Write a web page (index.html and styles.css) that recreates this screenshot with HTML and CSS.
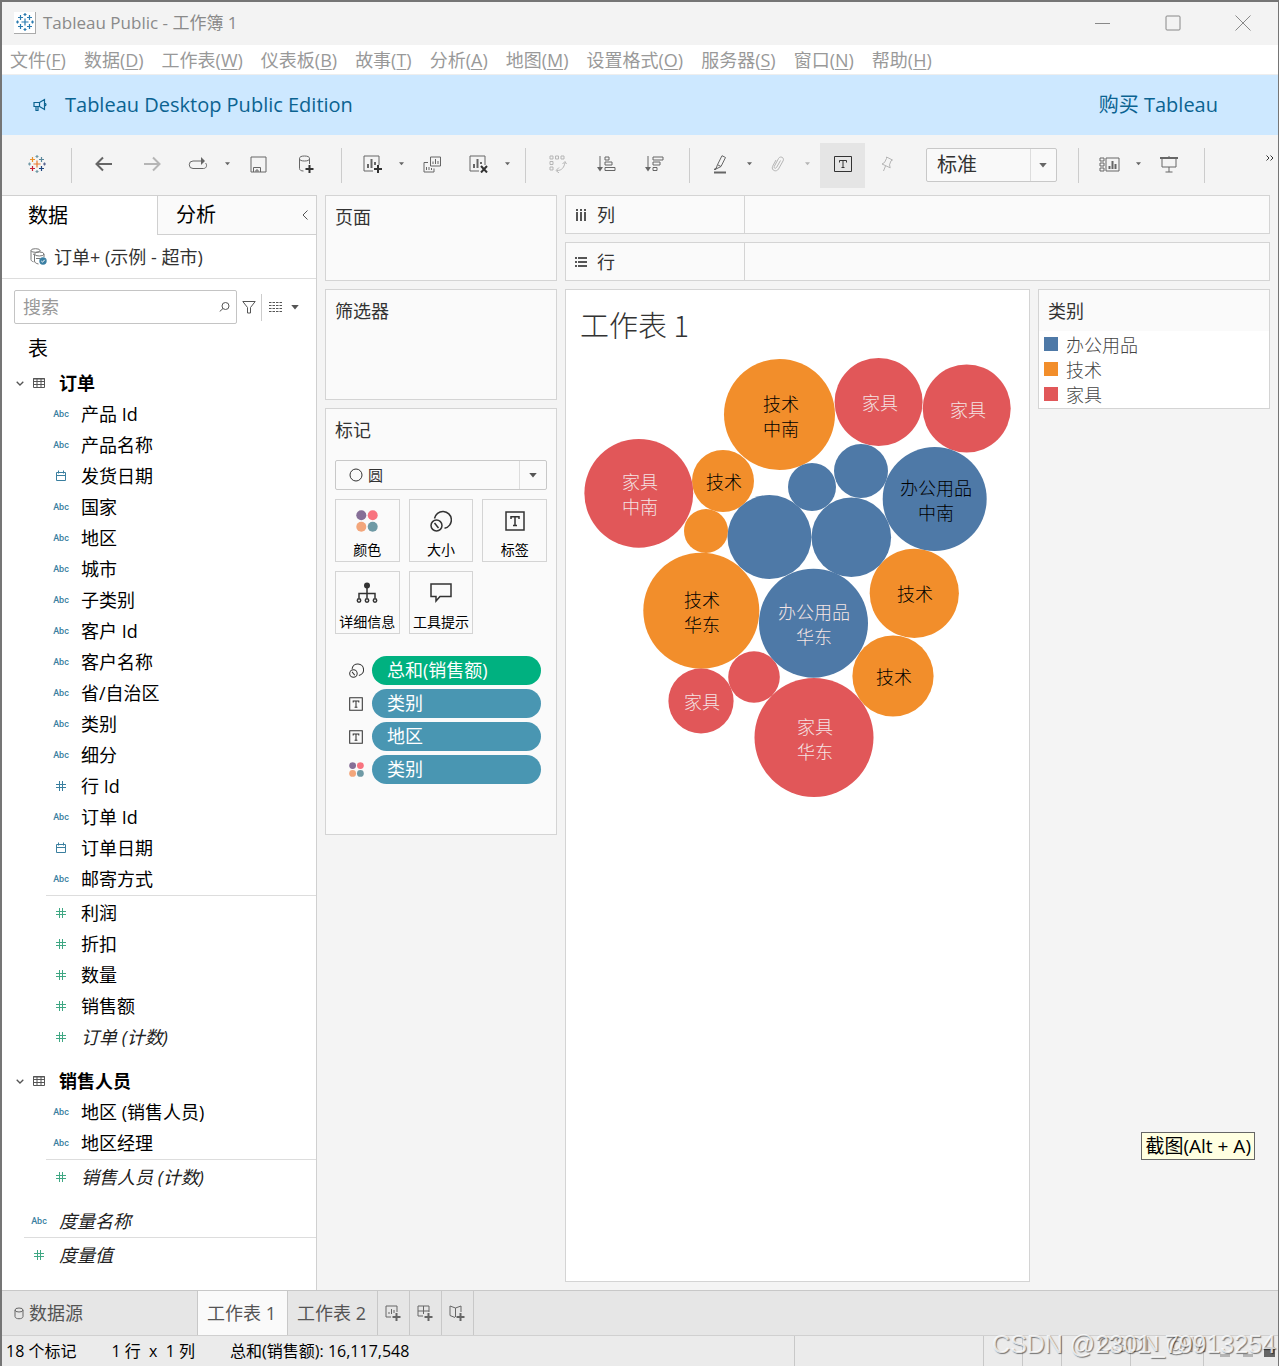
FILE: index.html
```html
<!DOCTYPE html>
<html lang="zh-CN">
<head>
<meta charset="utf-8">
<title>Tableau Public - 工作簿 1</title>
<link rel="stylesheet" href="styles.css">
</head>
<body>
<svg class="defs" aria-hidden="true">
  <symbol id="i-hash" viewBox="0 0 10 10"><path d="M3.5 0v10M6.5 0v10M0 3.5h10M0 6.5h10" fill="none" stroke="currentColor"/></symbol>
  <symbol id="i-cal" viewBox="0 0 12 12"><path d="M1.5 2.5h9v8h-9zM1.5 5.5h9M3.5 .5v3M8.500 .5v3" fill="none" stroke="currentColor"/></symbol>
  <symbol id="i-table" viewBox="0 0 12 10"><path d="M.5.500h11v9H.5zM0 1h12M.5 3.500h11M.5 6.500h11M4 1v8.500M8 1v8.500" fill="none" stroke="currentColor"/></symbol>
  <symbol id="i-down" viewBox="0 0 8 5"><path d="M.7 .7 4 4 7.300 .7" fill="none" stroke="currentColor" stroke-width="1.300"/></symbol>
  <symbol id="i-caret" viewBox="0 0 6 4"><path d="M0 0h6L3 3.500z" fill="currentColor"/></symbol>
  <symbol id="i-text" viewBox="0 0 20 20"><path d="M1 1h18v18H1z" fill="none" stroke="currentColor" stroke-width="1.500"/><path d="M6 8V5.700h8V8M10 5.700V14.500M8 14.500h4" fill="none" stroke="currentColor" stroke-width="1.500"/></symbol>
  <symbol id="i-size" viewBox="0 0 22 22"><path d="M4.500 8.500a8.500 8.500 0 1 1 10 9.800" fill="none" stroke="currentColor" stroke-width="1.500"/><circle cx="6.500" cy="15.500" r="5.500" fill="none" stroke="currentColor" stroke-width="1.500"/><path d="M4.500 13l4 5" stroke="currentColor" stroke-width="1.500"/></symbol>
  <symbol id="i-color" viewBox="0 0 22 22"><circle cx="5.300" cy="5.300" r="5" fill="#866f97"/><circle cx="16.700" cy="5.300" r="5" fill="#f8737f"/><circle cx="5.300" cy="16.700" r="5" fill="#f3a67b"/><circle cx="16.700" cy="16.700" r="5" fill="#6f9aa5"/></symbol>
  <symbol id="i-cross" viewBox="0 0 18 18"><path d="M9 5.500v7M5.500 9h7"/><path d="M4.500 2v5M2 4.500h5M13.500 2v5M11 4.500h5M4.500 11v5M2 13.500h5M13.500 11v5M11 13.500h5M9 0v3M7.500 1.500h3M9 15v3M7.500 16.500h3M1.500 7.500v3M0 9h3M16.500 7.500v3M15 9h3"/></symbol>
</svg>

<div class="window">
  <header class="titlebar">
    <span class="app-icon"><svg width="18" height="18" fill="none" stroke="#2a7bb0" stroke-width="1.200"><use href="#i-cross"/></svg></span>
    <h1>Tableau Public - 工作簿 1</h1>
    <div class="controls">
      <button type="button" aria-label="最小化"><svg width="16" height="16" viewBox="0 0 16 16"><path d="M0 8.500h15"/></svg></button>
      <button type="button" aria-label="最大化"><svg width="16" height="16" viewBox="0 0 16 16"><rect x="1" y="1" width="14" height="14" rx="1"/></svg></button>
      <button type="button" aria-label="关闭"><svg width="16" height="16" viewBox="0 0 16 16"><path d="M.5.5l15 15M15.500.5l-15 15"/></svg></button>
    </div>
  </header>

  <nav class="menubar">
    <a href="#">文件(<u>F</u>)</a><a href="#">数据(<u>D</u>)</a><a href="#">工作表(<u>W</u>)</a><a href="#">仪表板(<u>B</u>)</a><a href="#">故事(<u>T</u>)</a><a href="#">分析(<u>A</u>)</a><a href="#">地图(<u>M</u>)</a><a href="#">设置格式(<u>O</u>)</a><a href="#">服务器(<u>S</u>)</a><a href="#">窗口(<u>N</u>)</a><a href="#">帮助(<u>H</u>)</a>
  </nav>

  <div class="banner">
    <svg width="14" height="14" viewBox="0 0 14 14" fill="none" stroke="#0b6391" stroke-width="1.200"><path d="M1 4.500h5.500v4H1zM6.500 4.500l5-3v10l-5-3M3 8.500v4h2v-4M11.500 5c2 .3 2 2.700 0 3"/></svg>
    <span>Tableau Desktop Public Edition</span>
    <a href="#">购买 Tableau</a>
  </div>

  <div class="toolbar">
    <div class="group first">
      <button type="button" class="logo" aria-label="起始页"><svg width="18" height="18" viewBox="0 0 18 18" stroke-width="1.200"><path d="M9 5.500v7M5.500 9h7" stroke="#e8762c"/><path d="M4.500 2v5M2 4.500h5" stroke="#eb912b"/><path d="M13.500 2v5M11 4.500h5" stroke="#59879b"/><path d="M4.500 11v5M2 13.500h5" stroke="#c72035"/><path d="M13.500 11v5M11 13.500h5" stroke="#1f457e"/><path d="M9 0v3M7.500 1.500h3M9 15v3M7.500 16.500h3M1.500 7.500v3M0 9h3" stroke="#7199a6"/><path d="M16.500 7.500v3M15 9h3" stroke="#5c6692"/></svg></button>
    </div>
    <div class="group">
      <button type="button" aria-label="撤消"><svg width="18" height="16" viewBox="0 0 18 16" class="bold"><path d="M17 8H2M8 1.500 1.500 8 8 14.500"/></svg></button>
      <button type="button" class="off" aria-label="重做"><svg width="18" height="16" viewBox="0 0 18 16" class="bold"><path d="M1 8h15M10 1.500 16.500 8 10 14.500"/></svg></button>
      <button type="button" class="with-menu" aria-label="重播"><svg width="20" height="14" viewBox="0 0 20 14"><path d="M14 4H5a3.700 3.700 0 0 0 0 7.500h10.500c3 0 4-3.500 2-5.500"/><path d="M13 0l4 4-4 4z" fill="currentColor" stroke="none"/></svg></button>
      <button type="button" class="caret" aria-label="更多"><svg width="5" height="4"><use href="#i-caret"/></svg></button>
      <button type="button" aria-label="保存"><svg width="17" height="17" viewBox="0 0 17 17"><path d="M1 1h15v15H1zM3.500 16v-4.500h7V16M6 16v-2h2v2"/></svg></button>
      <button type="button" aria-label="新建数据源"><svg width="18" height="18" viewBox="0 0 18 18"><ellipse cx="7.500" cy="3.500" rx="5" ry="2.500"/><path d="M2.500 3.500v10c0 1.500 1.500 2.500 4 2.500M12.500 3.500V9"/><path class="strong" d="M12.500 10v8M8.500 14h8"/></svg></button>
    </div>
    <div class="group">
      <button type="button" class="with-menu" aria-label="新建工作表"><svg width="19" height="18" viewBox="0 0 19 18"><path d="M10 16H1V1h15v9"/><path class="thick" d="M5 13V9M8.500 13V4M12 10V7"/><path class="strong" d="M15 10v8M11 14h8"/></svg></button>
      <button type="button" class="caret" aria-label="更多"><svg width="5" height="4"><use href="#i-caret"/></svg></button>
      <button type="button" aria-label="复制工作表"><svg width="18" height="17" viewBox="0 0 18 17"><path d="M7.500 1h10v9h-10zM5 6.500H1V16h10v-3.500M3.500 14v-3M6 14v-3M8.500 14v-2M10 8V5.500M12.500 8V3M15 8V5"/></svg></button>
      <button type="button" class="with-menu" aria-label="清除工作表"><svg width="19" height="18" viewBox="0 0 19 18"><path d="M10 16H1V1h15v9"/><path class="thick" d="M5 13V9M8.500 13V4M12 9V7"/><path class="strong" d="M12 11l6 6.500M18 11l-6 6.500"/></svg></button>
      <button type="button" class="caret" aria-label="更多"><svg width="5" height="4"><use href="#i-caret"/></svg></button>
    </div>
    <div class="group">
      <button type="button" class="off" aria-label="交换行和列"><svg width="18" height="18" viewBox="0 0 18 18"><path d="M1 1h3v3H1zM6.500 1h3v3h-3zM12 1h3v3h-3zM1 6.500h3v3H1zM1 12h3v3H1zM8 15.500c5 0 7-3 8-8M13.500 9 16 6.500 17.500 9M10 12.500 7 15.500l3 2.500"/></svg></button>
      <button type="button" aria-label="升序排序"><svg width="19" height="16" viewBox="0 0 19 16"><path d="M3 0v12M8 1h4v3H8zM8 6h7v3H8zM8 11.500h10v3H8z"/><path d="M0 11h6l-3 4.500z" fill="currentColor" stroke="none"/></svg></button>
      <button type="button" aria-label="降序排序"><svg width="19" height="16" viewBox="0 0 19 16"><path d="M3 0v12M8 1h10v3H8zM8 6h7v3H8zM8 11.500h4v3H8z"/><path d="M0 11h6l-3 4.500z" fill="currentColor" stroke="none"/></svg></button>
    </div>
    <div class="group wide">
      <button type="button" class="with-menu" aria-label="突出显示"><svg width="14" height="19" viewBox="0 0 14 19"><path d="M9 .7l3.500 1.800-4.500 9-3.500-1.800zM4.500 9.500l-1.500 4.500 5-2.500M3 13l-2 1.500h2"/><path class="thick" d="M1 17.500h12"/></svg></button>
      <button type="button" class="caret" aria-label="更多"><svg width="5" height="4"><use href="#i-caret"/></svg></button>
      <button type="button" class="with-menu off" aria-label="分组"><svg width="14" height="16" viewBox="0 0 14 16"><path d="M9.500 4.500l-4 7c-1 1.500-3 .5-2.300-1L7.500 2.500C9-.5 14 1.500 12 5l-4.500 8c-2 3.500-7.500 1.500-6-2.500L5 4"/></svg></button>
      <button type="button" class="caret off" aria-label="更多"><svg width="5" height="4"><use href="#i-caret"/></svg></button>
      <button type="button" class="pressed" aria-label="显示标记标签"><svg width="18" height="16" viewBox="0 0 18 16"><path d="M.5.5h17v15H.5zM5.500 6.500v-2h7v2M9 4.500v7M7.500 11.500h3"/></svg></button>
      <button type="button" class="with-menu off" aria-label="固定轴"><svg width="14" height="16" viewBox="0 0 14 16"><path d="M6.500 1l6 3-1.500.8-1.500 4 .7 3L2 8l2.500-1.500 2-4zM5.500 10l-2 5"/></svg></button>
      <div class="fit">
        <select aria-label="适合"><option>标准</option><option>整个视图</option></select>
        <svg width="8" height="5"><use href="#i-caret"/></svg>
      </div>
    </div>
    <div class="group">
      <button type="button" class="with-menu" aria-label="显示卡"><svg width="21" height="15" viewBox="0 0 21 15"><path d="M1 1h4v3H1zM1 6h4v3H1zM1 11h4v3H1zM7 1h13v13H7z"/><path class="thick" d="M10.500 12V9M13.500 12V4M16.500 12V7"/></svg></button>
      <button type="button" class="caret" aria-label="更多"><svg width="5" height="4"><use href="#i-caret"/></svg></button>
      <button type="button" aria-label="演示模式"><svg width="18" height="17" viewBox="0 0 18 17"><path class="thick" d="M0 2h18"/><path d="M2 2v9h14V2M9 0v2M9 11v5M5.500 16h7"/></svg></button>
    </div>
    <button type="button" class="overflow" aria-label="更多工具"><svg width="8" height="6" viewBox="0 0 8 6"><path d="M.5.5 3 3 .5 5.500M4.500.5 7 3 4.500 5.500"/></svg></button>
  </div>

  <main class="workspace">
    <aside class="sidebar">
      <div class="side-tabs">
        <button type="button" class="active">数据</button>
        <button type="button">分析<svg width="6" height="10" viewBox="0 0 6 10"><path d="M5.500.5 1 5l4.500 4.500" fill="none" stroke="#555"/></svg></button>
      </div>
      <a href="#" class="source">
        <svg width="17" height="17" viewBox="0 0 17 17" fill="none" stroke="#777"><ellipse cx="5.500" cy="2.500" rx="4.500" ry="1.800"/><path d="M1 2.500v9c0 1 1 2 2.500 2.300M10 2.500v1M4.500 7v6c0 1.500 1.500 2.500 4 3M14 6v3M3 6l2 1"/><ellipse cx="9.300" cy="6" rx="4.700" ry="2"/><path d="M6 10.500h4"/><circle cx="13" cy="13" r="3.700" fill="#3a7fa3" stroke="none"/><path d="M11.300 13l1.200 1.200 2.200-2.400" stroke="#fff"/></svg>
        订单+ (示例 - 超市)
      </a>
      <div class="search-row">
        <div class="search">
          <input type="text" placeholder="搜索" aria-label="搜索">
          <svg width="11" height="10" viewBox="0 0 11 10" fill="none" stroke="#555"><circle cx="6.500" cy="4" r="3.500"/><path d="M4 6.500.7 9.500"/></svg>
        </div>
        <button type="button" aria-label="筛选"><svg width="14" height="13" viewBox="0 0 14 13" fill="none" stroke="#555"><path d="M.8.500h12.400L8.500 6.500V12l-3-0V6.500z"/></svg></button>
        <button type="button" class="view" aria-label="查看方式"><svg width="13" height="10" viewBox="0 0 13 10" stroke="#555" fill="none"><path d="M0 .5h13M0 3.500h13M0 6.500h13M0 9.500h13" stroke-dasharray="2.500 1"/></svg><svg class="arrow" width="8" height="5"><use href="#i-caret"/></svg></button>
      </div>
      <h2>表</h2>

      <h3><svg class="chev" width="8" height="5"><use href="#i-down"/></svg><svg width="12" height="10"><use href="#i-table"/></svg>订单</h3>
      <ul class="fields dims">
        <li><i>Abc</i>产品 Id</li>
        <li><i>Abc</i>产品名称</li>
        <li><i><svg width="12" height="12"><use href="#i-cal"/></svg></i>发货日期</li>
        <li><i>Abc</i>国家</li>
        <li><i>Abc</i>地区</li>
        <li><i>Abc</i>城市</li>
        <li><i>Abc</i>子类别</li>
        <li><i>Abc</i>客户 Id</li>
        <li><i>Abc</i>客户名称</li>
        <li><i>Abc</i>省/自治区</li>
        <li><i>Abc</i>类别</li>
        <li><i>Abc</i>细分</li>
        <li><i><svg width="10" height="10"><use href="#i-hash"/></svg></i>行 Id</li>
        <li><i>Abc</i>订单 Id</li>
        <li><i><svg width="12" height="12"><use href="#i-cal"/></svg></i>订单日期</li>
        <li><i>Abc</i>邮寄方式</li>
      </ul>
      <ul class="fields measures">
        <li><i><svg width="10" height="10"><use href="#i-hash"/></svg></i>利润</li>
        <li><i><svg width="10" height="10"><use href="#i-hash"/></svg></i>折扣</li>
        <li><i><svg width="10" height="10"><use href="#i-hash"/></svg></i>数量</li>
        <li><i><svg width="10" height="10"><use href="#i-hash"/></svg></i>销售额</li>
        <li><i><svg width="10" height="10"><use href="#i-hash"/></svg></i><em>订单 (计数)</em></li>
      </ul>

      <h3><svg class="chev" width="8" height="5"><use href="#i-down"/></svg><svg width="12" height="10"><use href="#i-table"/></svg>销售人员</h3>
      <ul class="fields dims">
        <li><i>Abc</i>地区 (销售人员)</li>
        <li><i>Abc</i>地区经理</li>
      </ul>
      <ul class="fields measures">
        <li><i><svg width="10" height="10"><use href="#i-hash"/></svg></i><em>销售人员 (计数)</em></li>
      </ul>

      <ul class="fields dims outer"><li><i>Abc</i><em>度量名称</em></li></ul>
      <ul class="fields measures outer"><li><i><svg width="10" height="10"><use href="#i-hash"/></svg></i><em>度量值</em></li></ul>
    </aside>

    <section class="cards">
      <div class="card pages"><h2>页面</h2></div>
      <div class="card filters"><h2>筛选器</h2></div>
      <div class="card marks">
        <h2>标记</h2>
        <div class="mark-type">
          <svg width="14" height="14" viewBox="0 0 14 14"><circle cx="7" cy="7" r="6" fill="none" stroke="#333"/></svg>
          <select aria-label="标记类型"><option>圆</option><option>条形图</option></select>
          <span class="drop"><svg width="8" height="5"><use href="#i-caret"/></svg></span>
        </div>
        <div class="shelves">
          <button type="button"><svg width="22" height="22"><use href="#i-color"/></svg>颜色</button>
          <button type="button"><svg width="22" height="22"><use href="#i-size"/></svg>大小</button>
          <button type="button"><svg width="20" height="22"><use href="#i-text"/></svg>标签</button>
          <button type="button"><svg width="22" height="22" viewBox="0 0 22 22" fill="none" stroke="#333" stroke-width="1.500"><circle cx="11" cy="3.500" r="3" fill="#333" stroke="none"/><path d="M11 6v10M3 16v-4.500h16V16"/><circle cx="3" cy="18.500" r="1.700"/><circle cx="11" cy="18.500" r="1.700"/><circle cx="19" cy="18.500" r="1.700"/></svg>详细信息</button>
          <button type="button"><svg width="22" height="22" viewBox="0 0 22 22" fill="none" stroke="#333" stroke-width="1.500"><path d="M1 2h20v12.500H10L6 19v-4.500H1z"/></svg>工具提示</button>
        </div>
        <ul class="pills">
          <li><svg width="15" height="15"><use href="#i-size"/></svg><span class="pill green">总和(销售额)</span></li>
          <li><svg width="14" height="14"><use href="#i-text"/></svg><span class="pill">类别</span></li>
          <li><svg width="14" height="14"><use href="#i-text"/></svg><span class="pill">地区</span></li>
          <li><svg width="15" height="15"><use href="#i-color"/></svg><span class="pill">类别</span></li>
        </ul>
      </div>
    </section>

    <section class="canvas">
      <div class="shelf"><h2><svg width="12" height="12" viewBox="0 0 12 12" fill="#555"><path d="M1 0h2v2H1zM5 0h2v2H5zM9 0h2v2H9zM1 3h2v9H1zM5 3h2v9H5zM9 3h2v9H9z"/></svg>列</h2></div>
      <div class="shelf"><h2><svg width="12" height="12" viewBox="0 0 12 12" fill="#555"><path d="M0 1h2v2H0zM0 5h2v2H0zM0 9h2v2H0zM3 1h9v2H3zM3 5h9v2H3zM3 9h9v2H3z"/></svg>行</h2></div>
      <div class="view-row">
        <div class="sheet">
          <h2>工作表 1</h2>
          <svg class="bubbles" viewBox="566 350 463 460" role="img" aria-label="按类别和地区的销售额">
            <g class="tech">
              <circle cx="779.500" cy="414.500" r="55.500"/><circle cx="723" cy="481" r="31"/><circle cx="706" cy="531" r="22"/><circle cx="701.300" cy="610.700" r="58"/><circle cx="914.300" cy="593.300" r="44.600"/><circle cx="893" cy="676" r="40.600"/>
            </g>
            <g class="furn">
              <circle cx="878.600" cy="402" r="44"/><circle cx="966.700" cy="408.500" r="44"/><circle cx="638.800" cy="493.300" r="54.400"/><circle cx="701" cy="701" r="32.600"/><circle cx="754" cy="677" r="25.800"/><circle cx="814" cy="737.500" r="59.500"/>
            </g>
            <g class="office">
              <circle cx="812" cy="487" r="24"/><circle cx="861" cy="471" r="27"/><circle cx="934.700" cy="499" r="52"/><circle cx="769.500" cy="537" r="42"/><circle cx="851.300" cy="537.300" r="39.800"/><circle cx="813.500" cy="623.200" r="54.500"/>
            </g>
            <g class="dark">
              <text x="781" y="411">技术</text><text x="781" y="436">中南</text>
              <text x="724" y="489">技术</text>
              <text x="936" y="495">办公用品</text><text x="936" y="520">中南</text>
              <text x="702" y="607">技术</text><text x="702" y="632">华东</text>
              <text x="915" y="601">技术</text>
              <text x="894" y="684">技术</text>
            </g>
            <g class="light">
              <text x="880" y="410">家具</text>
              <text x="968" y="417">家具</text>
              <text x="640" y="489">家具</text><text x="640" y="514">中南</text>
              <text x="814" y="619">办公用品</text><text x="814" y="644">华东</text>
              <text x="702" y="709">家具</text>
              <text x="815" y="734">家具</text><text x="815" y="759">华东</text>
            </g>
          </svg>
        </div>
        <div class="legend">
          <h2>类别</h2>
          <ul>
            <li class="office">办公用品</li>
            <li class="tech">技术</li>
            <li class="furn">家具</li>
          </ul>
        </div>
      </div>
    </section>
  </main>

  <nav class="sheet-tabs">
    <button type="button" class="data-source"><svg width="10" height="13" viewBox="0 0 10 13" fill="none" stroke="#666"><ellipse cx="5" cy="3" rx="4" ry="2"/><path d="M1 3v6.500c0 3 8 3 8 0V3"/></svg>数据源</button>
    <button type="button" class="active">工作表 1</button>
    <button type="button">工作表 2</button>
    <button type="button" class="new" aria-label="新建工作表"><svg width="16" height="16" viewBox="0 0 16 16"><path d="M6 12H1V1h11v6M4 9V7M6.500 9V4M9 8V5"/><path class="plus" d="M11.500 8v8M7.500 12h8"/></svg></button>
    <button type="button" class="new" aria-label="新建仪表板"><svg width="16" height="16" viewBox="0 0 16 16"><path d="M6 11H1V1h11v6M1 6h11M6.500 1v8"/><path class="plus" d="M11.500 8v8M7.500 12h8"/></svg></button>
    <button type="button" class="new" aria-label="新建故事"><svg width="16" height="16" viewBox="0 0 16 16"><path d="M6 12.500 1 10.500V1l5.500 2L12 1v6M6.500 3v9"/><path class="plus" d="M11.500 8v8M7.500 12h8"/></svg></button>
  </nav>

  <footer class="status">
    <span>18 个标记</span><span>1 行&nbsp; x&nbsp; 1 列</span><span>总和(销售额): 16,117,548</span>
    <div class="cells"><b></b><b></b><b></b><b></b><b></b><b><svg width="56" height="12" viewBox="0 0 56 12"><path d="M1 9h10v3H1zM24 9h10v3H24z" fill="#b5b5b5"/><path d="M45 2h11v10H45z" fill="#666"/></svg></b></div>
  </footer>

  <div class="tip">截图(Alt + A)</div>
  <div class="mark back">CSDN @M</div>
  <div class="mark">CSDN @2301_79913254</div>
</div>
</body>
</html>
```
FILE: styles.css
```css
* { box-sizing: border-box; }
body {
  margin: 0;
  font-family: "Open Sans", "Noto Sans CJK SC", sans-serif;
  font-size: 18px;
  line-height: 24px;
  color: #000;
  background: #f4f4f4;
}
h1, h2, h3, ul { margin: 0; padding: 0; font-weight: 400; }
h1, h2, h3 { font-size: 18px; }
ul { list-style: none; }
a { color: inherit; text-decoration: none; }
button, select, input { font: inherit; color: inherit; border: 0; padding: 0; margin: 0; background: none; border-radius: 0; }
select { appearance: none; outline: 0; }
svg { display: block; flex: none; }
.defs { position: absolute; width: 0; height: 0; }

.window {
  position: relative;
  display: flex;
  flex-direction: column;
  min-height: 100vh;
  border: solid #757575;
  border-width: 2px 1px 0 2px;
}

/* title and menus */
.titlebar { display: flex; align-items: center; height: 43px; padding: 0 0 2px 12px; background: #f3f3f3; color: #8a8a8a; }
.titlebar h1 { margin-left: 7px; font-size: 17px; }
.app-icon { display: grid; place-items: center; width: 22px; height: 22px; background: #fff; border: solid #aaa; border-width: 0 1px 1px 0; }
.controls { display: flex; margin-left: auto; }
.controls button { display: grid; place-items: center; width: 70px; height: 40px; }
.controls svg { fill: none; stroke: #888; }
.menubar { display: flex; gap: 18px; height: 30px; padding: 3px 8px 0; background: #fff; border-bottom: 1px solid #eee; color: #999; white-space: nowrap; }
.menubar u { text-underline-offset: 2px; text-decoration-thickness: 1px; }
.banner { display: flex; align-items: center; height: 60px; padding: 0 60px 0 31px; background: #cde8ff; color: #0b6391; font-size: 20px; }
.banner span { margin-left: 18px; }
.banner a { margin-left: auto; }

/* toolbar */
.toolbar { display: flex; align-items: center; height: 60px; color: #666; }
.group { display: flex; align-items: center; height: 35px; padding: 0 11px 0 8px; border-right: 1px solid #ccc; }
.group.first { padding: 0; }
.group.wide { padding-right: 21px; }
.toolbar button { display: grid; place-items: center; width: 48px; height: 45px; padding-bottom: 2px; }
.toolbar button.logo { width: 69px; }
.toolbar button.with-menu { width: 44px; }
.toolbar button.caret { width: 14px; }
.toolbar button.pressed { width: 45px; margin-left: 6px; background: #e5e5e5; color: #333; }
.toolbar button.overflow { width: 16px; margin-left: auto; place-items: start center; padding-top: 12px; color: #333; }
.toolbar .off { color: #b5b5b5; }
.toolbar button > svg { fill: none; stroke: currentColor; }
.toolbar .caret > svg { stroke: none; }
.toolbar .bold, .thick { stroke-width: 2; }
.strong { stroke: #333; stroke-width: 2; }
.fit { display: grid; grid-template-columns: 1fr 26px; align-items: center; width: 131px; height: 34px; margin-left: 17px; border: 1px solid #c8c8c8; border-radius: 2px; background: #f9f9f9; }
.fit select { grid-area: 1 / 1 / 2 / 3; height: 32px; padding-left: 10px; font-size: 20px; color: #333; }
.fit svg { grid-area: 1 / 2; justify-self: center; pointer-events: none; }
.fit::after { content: ""; grid-area: 1 / 2; height: 32px; border-left: 1px solid #ddd; pointer-events: none; }

.workspace { flex: 1; display: flex; gap: 8px; padding-right: 8px; }

/* data pane */
.sidebar { flex: none; width: 315px; padding-bottom: 19px; background: #fff; border: solid #d0d0d0; border-width: 1px 1px 0 0; }
.side-tabs { display: flex; height: 39px; font-size: 20px; }
.side-tabs button { flex: 1; padding-left: 26px; text-align: left; }
.side-tabs button + button { display: flex; align-items: center; justify-content: space-between; flex: none; width: 159px; padding: 0 8px 0 18px; background: #fafafa; border: solid #d0d0d0; border-width: 0 0 1px 1px; }
.source { display: flex; align-items: center; gap: 7px; height: 44px; padding-left: 28px; border-bottom: 1px solid #ddd; color: #333; }
.search-row { display: flex; align-items: center; gap: 5px; margin: 11px 16px 0 12px; height: 34px; }
.search { display: flex; align-items: center; width: 223px; height: 34px; padding: 0 6px 0 8px; border: 1px solid #c4c4c4; border-radius: 2px; }
.search input { flex: 1; min-width: 0; height: 30px; outline: 0; }
.search input::placeholder { color: #999; opacity: 1; }
.view { display: flex; align-items: center; gap: 9px; height: 27px; padding-left: 7px; border-left: 1px solid #ccc; color: #555; }
.sidebar h2 { margin: 13px 0 7px 26px; font-size: 20px; line-height: 24px; }
.sidebar h3 { display: flex; align-items: center; gap: 9px; height: 31px; padding: 0 0 1px 14px; font-weight: 700; }
.sidebar h3 svg { color: #555; margin-right: 5px; }
.sidebar h3 .chev { margin-right: 0; }
.fields li { display: flex; align-items: center; gap: 8px; height: 31px; padding-bottom: 1px; }
.fields { margin-left: 44px; padding-left: 3px; }
.fields i { display: grid; place-items: center; width: 24px; font: 500 9px/12px Roboto, sans-serif; color: #3a7f9f; }
.measures { padding-top: 2px; border-top: 1px solid #ddd; }
.measures i { color: #3fa783; }
.measures + h3, .measures + .outer { margin-top: 13px; }
.fields.outer { margin-left: 22px; }
.fields em { color: #222; }

/* shelves and cards */
.cards { flex: none; width: 232px; display: flex; flex-direction: column; gap: 8px; }
.card { padding: 9px; background: #fafafa; border: 1px solid #d4d4d4; color: #333; }
.pages { height: 86px; }
.filters { height: 111px; }
.marks { height: 427px; }
.mark-type { display: grid; grid-template-columns: 32px 1fr 27px; align-items: center; height: 30px; margin-top: 18px; border: 1px solid #c8c8c8; border-radius: 2px; font-size: 15px; }
.mark-type > svg { grid-area: 1 / 1; justify-self: end; margin-right: 5px; }
.mark-type select { grid-area: 1 / 1 / 2 / 4; height: 28px; padding-left: 32px; }
.drop { grid-area: 1 / 3; display: grid; place-items: center; height: 28px; border-left: 1px solid #ddd; color: #555; pointer-events: none; }
.shelves { display: grid; grid-template-columns: repeat(3, 1fr); gap: 9px; margin-top: 9px; }
.shelves button { display: flex; flex-direction: column; align-items: center; height: 63px; padding-top: 10px; border: 1px solid #d4d4d4; font-size: 14px; line-height: 20px; color: #000; white-space: nowrap; }
.shelves svg { margin-bottom: 8px; color: #333; }
.pills { display: flex; flex-direction: column; gap: 4px; margin: 22px 6px 0 10px; }
.pills li { display: grid; grid-template-columns: 22px 1fr; gap: 5px; align-items: center; justify-items: center; }
.pill { justify-self: stretch; height: 29px; padding-left: 15px; border-radius: 15px; line-height: 28px; background: #4996b2; color: #fff; }
.pill.green { background: #00b180; }

.canvas { flex: 1; min-width: 0; display: flex; flex-direction: column; gap: 8px; padding-bottom: 8px; }
.shelf { height: 39px; background: #fafafa; border: 1px solid #d4d4d4; }
.shelf h2 { display: flex; align-items: center; gap: 10px; width: 179px; height: 37px; padding-left: 9px; border-right: 1px solid #d4d4d4; color: #333; }
.view-row { flex: 1; display: flex; align-items: flex-start; gap: 8px; }
.sheet { flex: 1; align-self: stretch; background: #fff; border: 1px solid #d4d4d4; }
.sheet h2 { padding: 14px 14px 6px; font-family: "Noto Sans CJK SC", sans-serif; font-size: 29px; font-weight: 300; line-height: 40px; color: #333; }
.bubbles { width: 100%; height: auto; font-family: "Noto Sans CJK SC", sans-serif; font-size: 18px; font-weight: 300; text-anchor: middle; }
.bubbles .tech { fill: #f28e2b; }
.bubbles .furn { fill: #e15759; }
.bubbles .office { fill: #4e79a7; }
.bubbles .dark { fill: #000; }
.bubbles .light { fill: #f4e4e4; }
.legend { width: 232px; padding-bottom: 2px; background: #fff; border: 1px solid #d4d4d4; }
.legend h2 { height: 41px; padding: 9px; background: #fafafa; color: #333; }
.legend li { display: flex; align-items: center; gap: 8px; height: 25px; padding-left: 5px; font-family: "Noto Sans CJK SC", sans-serif; font-weight: 300; color: #444; }
.legend li::before { content: ""; width: 14px; height: 14px; background: #4e79a7; }
.legend .tech::before { background: #f28e2b; }
.legend .furn::before { background: #e15759; }

/* bottom bars */
.sheet-tabs { display: flex; height: 45px; background: #e6e6e6; border-top: 1px solid #c8c8c8; color: #555; }
.sheet-tabs button { padding: 0 11px 0 9px; border-right: 1px solid #c8c8c8; }
.sheet-tabs .active { background: #fafafa; }
.sheet-tabs .data-source { display: flex; align-items: center; gap: 5px; width: 196px; padding-left: 12px; }
.sheet-tabs .new { display: grid; place-items: center; width: 32px; padding: 0; }
.new svg { fill: none; stroke: #666; }
.plus { stroke-width: 2; }
.status { display: flex; align-items: center; height: 31px; padding-left: 4px; background: #ebebeb; border-top: 1px solid #d0d0d0; font-size: 16px; white-space: nowrap; }
.status span { margin-right: 35px; }
.cells { display: grid; grid-template-columns: 189px 39px 39px 69px 73px 75px; height: 30px; margin-left: auto; }
.cells b { border-left: 1px solid #c8c8c8; padding: 9px 0 0 15px; }

.tip { position: absolute; right: 23px; bottom: 206px; padding: 0 3px; border: 1px solid #666; background: #ffffe1; font-size: 19px; line-height: 26px; }
.mark { position: absolute; right: 2px; bottom: 9px; font: 25px/26px "Liberation Sans", sans-serif; color: rgba(255, 255, 255, .8); text-shadow: 1px 1px 1px rgba(0, 0, 0, .5); white-space: nowrap; }
.mark.back { right: 72px; font-size: 22px; }
```
